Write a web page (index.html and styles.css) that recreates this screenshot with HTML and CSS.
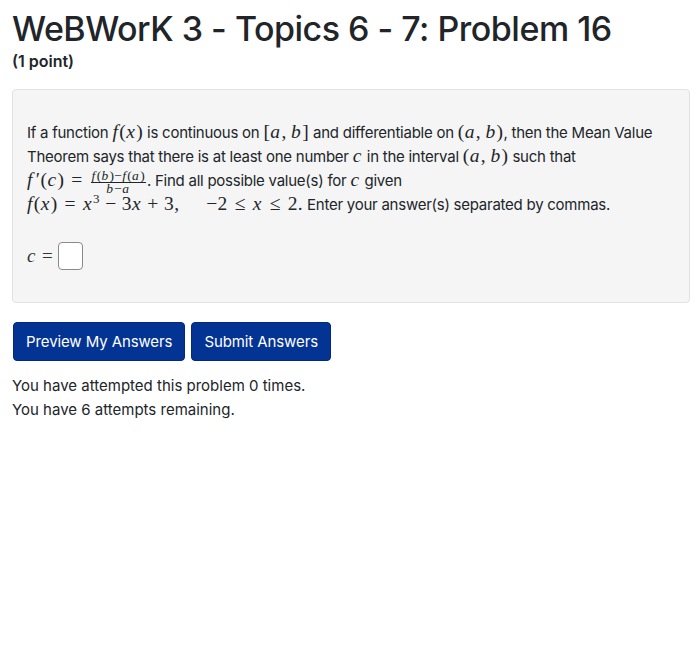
FILE: index.html
```html
<!DOCTYPE html>
<html>
<head>
<meta charset="utf-8">
<link rel="stylesheet" href="styles.css">
</head>
<body>
<div class="page">
  <h1 class="title">WeBWorK 3 - Topics 6 - 7: Problem 16</h1>
  <div class="points">(1 point)</div>
  <div class="problem">
    <p class="text">If a function <span class="m"><i>f</i>(<i>x</i>)</span> is continuous on <span class="m">[<i>a</i>,&#8201;<i>b</i>]</span> and differentiable on <span class="m">(<i>a</i>,&#8201;<i>b</i>)</span>, then the Mean Value Theorem says that there is at least one number <span class="m"><i>c</i></span> in the interval <span class="m">(<i>a</i>,&#8201;<i>b</i>)</span> such that<br><span class="m"><i>f</i>&#8202;′(<i>c</i>)&#8196;=&#8196;<span class="frac"><span class="num"><i>f</i>(<i>b</i>)−<i>f</i>(<i>a</i>)</span><span class="den"><i>b</i>−<i>a</i></span></span></span>. Find all possible value(s) for <span class="m"><i>c</i></span> given<br><span class="m"><i>f</i>(<i>x</i>)&#8196;=&#8196;<i>x</i><sup>3</sup>&#8197;−&#8197;3<i>x</i>&#8197;+&#8197;3,&#8195;&#8196;−2&#8196;≤&#8196;<i>x</i>&#8196;≤&#8196;2.</span> Enter your answer(s) separated by commas.</p>
    <div class="answer"><span class="m"><i>c</i>&#8197;=</span><span class="input"></span></div>
  </div>
  <div class="buttons">
    <button class="btn">Preview My Answers</button>
    <button class="btn">Submit Answers</button>
  </div>
  <p class="info">You have attempted this problem 0 times.<br>You have 6 attempts remaining.</p>
</div>
</body>
</html>
```
FILE: styles.css
```css
html, body {
  margin: 0;
  padding: 0;
  background: #fff;
}
body {
  font-family: Inter, "Noto Sans", sans-serif;
  color: #212529;
}
.page {
  padding: 9px 10px 0 12px;
}
.title {
  margin: 0;
  font-size: 34px;
  font-weight: 500;
  line-height: 40px;
  letter-spacing: -0.5px;
}
.points {
  font-size: 16px;
  font-weight: 600;
  margin-top: 2px;
  line-height: 20px;
}
.problem {
  margin-top: 18px;
  background: #f5f5f5;
  border: 1px solid #e2e2e2;
  border-radius: 4px;
  padding: 31px 14px 30px 14px;
  height: 151px;
}
.text {
  margin: 0;
  font-size: 15px;
  line-height: 24px;
  letter-spacing: -0.25px;
}
.m {
  font-family: "Liberation Serif", serif;
  font-size: 19.5px;
  letter-spacing: 0.4px;
  line-height: 18px;
}
.m i {
  font-style: italic;
  padding-right: 1px;
}
.m sup {
  font-size: 13px;
  line-height: 0;
}
.frac {
  display: inline-flex;
  flex-direction: column;
  align-items: center;
  vertical-align: middle;
  font-size: 13.5px;
  line-height: 11px;
  height: 23px;
  letter-spacing: 0.3px;
  margin: 0 1px;
}
.num {
  border-bottom: 1px solid #212529;
  padding: 0 1px 1px;
}
.answer {
  margin-top: 25px;
  display: flex;
  align-items: center;
  gap: 5px;
}
.answer .m {
  font-size: 19px;
  color: #333;
}
.input {
  display: inline-block;
  width: 23px;
  height: 26px;
  border: 1px solid #8a8a8a;
  border-radius: 4px;
  background: #fff;
}
.buttons {
  margin-top: 19px;
  display: flex;
  gap: 6px;
  margin-left: 1px;
}
.btn {
  font-family: Inter, "Noto Sans", sans-serif;
  font-size: 15px;
  letter-spacing: -0.1px;
  color: #fff;
  background: #033393;
  border: 1px solid #022a7a;
  border-radius: 4px;
  height: 39px;
  padding: 0 12px;
}
.info {
  margin: 13px 0 0 0;
  font-size: 15px;
  line-height: 24px;
}
```
